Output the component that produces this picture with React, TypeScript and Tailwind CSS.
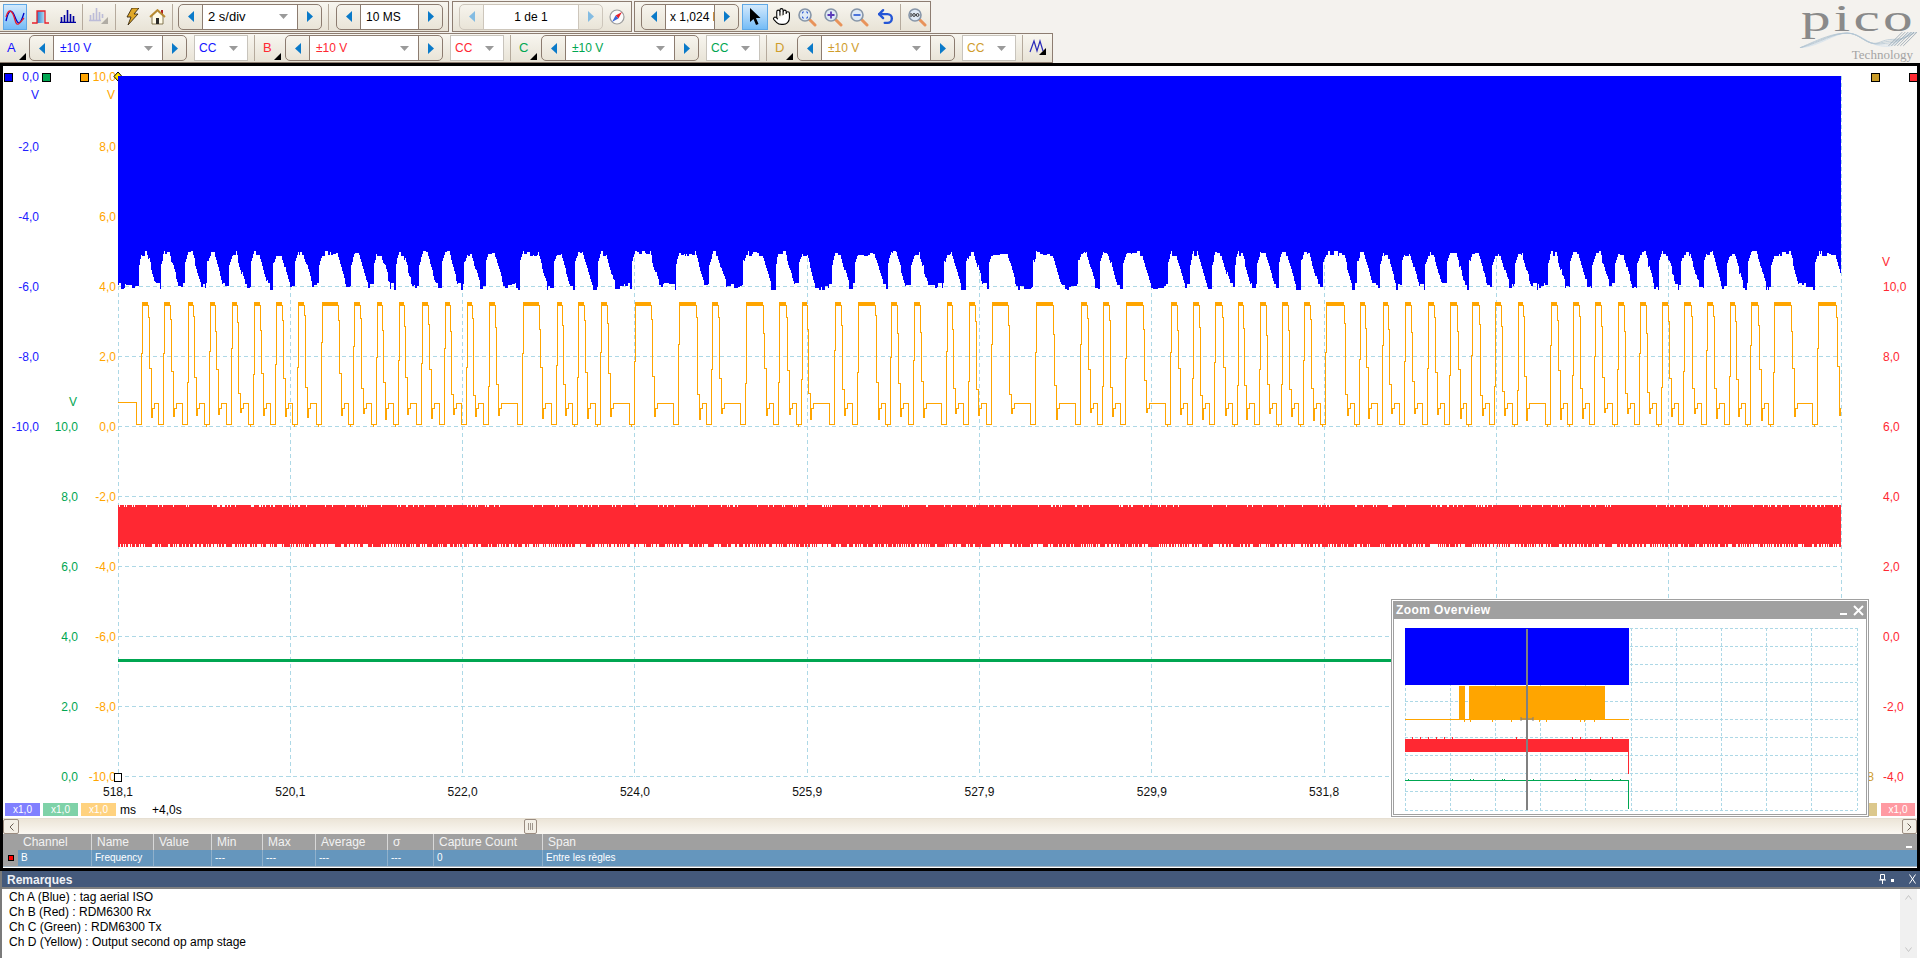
import React from "react";
import { Hand, Undo2 } from "lucide-react";

// rise / fall x of every high pulse on channel D, read off the trace
const PULSES: [number, number][] = [
  [141, 150], [163, 172], [187, 195], [209, 217], [231, 239], [253, 262], [275, 284], [297, 306], [321, 340], [353, 362],
  [376, 384], [398, 406], [421, 430], [444, 452], [466, 474], [488, 497], [522, 541], [556, 564], [577, 586], [600, 609],
  [634, 653], [678, 698], [711, 720], [745, 765], [778, 788], [801, 809], [834, 843], [857, 877], [890, 899], [913, 922],
  [946, 954], [968, 977], [991, 1010], [1035, 1055], [1080, 1089], [1102, 1111], [1125, 1145], [1170, 1179], [1192, 1201],
  [1214, 1224], [1237, 1245], [1259, 1268], [1281, 1290], [1303, 1312], [1325, 1346], [1359, 1367], [1382, 1390], [1404, 1413],
  [1427, 1436], [1449, 1459], [1471, 1481], [1494, 1503], [1517, 1525], [1550, 1559], [1572, 1581], [1594, 1603], [1617, 1626],
  [1639, 1648], [1661, 1670], [1683, 1693], [1706, 1715], [1729, 1737], [1750, 1760], [1773, 1793], [1817, 1838],
];

const PLOT_L = 118;
const PLOT_R = 1841;

function seeded(start: number) {
  let s = start;
  return () => {
    s = (s * 1664525 + 1013904223) % 4294967296;
    return s / 4294967296;
  };
}

function blockNoise(rnd: () => number, maxW: number, lo: number, span: number) {
  const out: number[] = [];
  while (out.length < PLOT_R - PLOT_L) {
    const w = 1 + Math.floor(rnd() * maxW);
    const y = lo + Math.floor(rnd() * span);
    for (let i = 0; i < w; i++) out.push(y);
  }
  return out;
}

function columnsPath(top: (i: number) => number, bottom: (i: number) => number) {
  let down = `M${PLOT_L} ${top(0)}`;
  for (let i = 0; i < PLOT_R - PLOT_L; i++) down += `V${bottom(i)}H${PLOT_L + i + 1}`;
  let up = "";
  for (let i = PLOT_R - PLOT_L - 1; i >= 0; i--) up += `V${top(i)}H${PLOT_L + i}`;
  return down + up + "Z";
}

function blueWave() {
  const rnd = seeded(11);
  const deep = blockNoise(rnd, 4, 283, 8);
  const crest = blockNoise(rnd, 4, 251, 6);
  const bottom = deep.slice();
  for (const [r, f] of PULSES) {
    for (let x = r - 2; x < f + 6 && x < PLOT_R; x++) {
      let y = crest[x - PLOT_L];
      if (x < r + 1) y += (r + 1 - x) * 3;
      if (x > f - 3) y += (x - (f - 3)) * 3.5;
      bottom[x - PLOT_L] = Math.round(y);
    }
  }
  return columnsPath(() => 76, (i) => bottom[i]);
}

function redWave() {
  const rnd = seeded(29);
  const top = blockNoise(rnd, 7, 505, 1).map(() => (rnd() < 0.14 ? 507 : 505));
  const low = blockNoise(rnd, 3, 544, 1).map(() => (rnd() < 0.6 ? 547 : 544));
  return columnsPath((i) => top[i], (i) => low[i]);
}

function orangeWave() {
  const rnd = seeded(53);
  const pick = (a: number, b: number) => Math.round(a + rnd() * (b - a));
  let d = `M${PLOT_L} 402H136V424`;
  PULSES.forEach(([r, f], n) => {
    const next = PULSES[n + 1];
    d += `H${r}V${pick(340, 390)}H${r + 1}V305H${f - 2}V${pick(315, 335)}H${f - 1}V${pick(365, 395)}H${f + 1}V${pick(412, 420)}H${f + 2}V408`;
    if (next) {
      const end = next[0] - 5;
      d += `H${f + 4}V403`;
      if (end - f > 20) {
        for (let x = f + 10; x < end - 4; x += pick(8, 18)) d += `H${x}V${pick(399, 406)}V403`;
      }
      d += `H${end}V424`;
      if (rnd() < 0.5) d += `H${end + 2}V427V424`;
    } else {
      d += `H${PLOT_R}`;
    }
  });
  return d;
}

const BLUE_PATH = blueWave();
const RED_PATH = redWave();
const ORANGE_PATH = orangeWave();

const X_LABELS = ["518,1", "520,1", "522,0", "524,0", "525,9", "527,9", "529,9", "531,8"];

const axisLeft: { x: number; fill: string; rows: [string, number][] }[] = [
  { x: 39, fill: "#2020ff", rows: [["0,0", 76], ["-2,0", 146], ["-4,0", 216], ["-6,0", 286], ["-8,0", 356], ["-10,0", 426]] },
  { x: 78, fill: "#00a651", rows: [["10,0", 426], ["8,0", 496], ["6,0", 566], ["4,0", 636], ["2,0", 706], ["0,0", 776]] },
  {
    x: 116,
    fill: "#ffa500",
    rows: [["10,0", 76], ["8,0", 146], ["6,0", 216], ["4,0", 286], ["2,0", 356], ["0,0", 426], ["-2,0", 496], ["-4,0", 566], ["-6,0", 636], ["-8,0", 706], ["-10,0", 776]],
  },
];

const axisRight: [string, number][] = [["10,0", 286], ["8,0", 356], ["6,0", 426], ["4,0", 496], ["2,0", 566], ["0,0", 636], ["-2,0", 706], ["-4,0", 776]];

const Triangle = ({ dir, color = "#0a7ac9" }: { dir: "left" | "right"; color?: string }) => (
  <svg width="6" height="11" viewBox="0 0 6 11">
    <path d={dir === "left" ? "M6 0V11L0 5.5Z" : "M0 0V11L6 5.5Z"} fill={color} />
  </svg>
);

const Chevron = () => (
  <svg width="9" height="5" viewBox="0 0 9 5" className="shrink-0">
    <path d="M0 0H9L4.5 5Z" fill="#9a9a9a" />
  </svg>
);

const Corner = () => (
  <svg width="7" height="7" viewBox="0 0 7 7" className="shrink-0">
    <path d="M7 0V7H0Z" fill="#000" />
  </svg>
);

const Sep = ({ className }: { className: string }) => <div className={`w-px h-[26px] bg-[#b5aa9c] shrink-0 ${className}`} />;

const Spin = ({
  fieldW,
  sideW = 25,
  disabled,
  className,
  children,
}: {
  fieldW: number;
  sideW?: number;
  disabled?: boolean;
  className?: string;
  children: React.ReactNode;
}) => (
  <div
    className={`flex h-[26px] shrink-0 rounded-[5px] border overflow-hidden ${disabled ? "border-[#cdc6bb]" : "border-[#8c7c70]"} ${className ?? ""}`}
    style={{ width: fieldW + sideW * 2 }}
  >
    <div className={`flex-1 flex items-center justify-center border-r ${disabled ? "border-[#cdc6bb]" : "border-[#8c7c70]"}`}>
      <Triangle dir="left" color={disabled ? "#84bce2" : "#0a7ac9"} />
    </div>
    <div className="bg-white h-full flex items-center overflow-hidden shrink-0" style={{ width: fieldW }}>
      {children}
    </div>
    <div className={`flex-1 flex items-center justify-center border-l ${disabled ? "border-[#cdc6bb]" : "border-[#8c7c70]"}`}>
      <Triangle dir="right" color={disabled ? "#84bce2" : "#0a7ac9"} />
    </div>
  </div>
);

const Btn = ({ w, active, children }: { w: string; active?: boolean; children: React.ReactNode }) => (
  <div
    className={`${w} h-[26px] shrink-0 flex items-center justify-center ${
      active ? "border border-[#5fa8e6] bg-gradient-to-b from-[#d2e9fc] to-[#74bcf6]" : ""
    }`}
  >
    {children}
  </div>
);

const Mag = ({ children }: { children?: React.ReactNode }) => (
  <svg width="20" height="20" viewBox="0 0 20 20">
    <line x1="12" y1="12" x2="18" y2="18" stroke="#e8935a" strokeWidth="3" strokeLinecap="round" />
    <circle cx="8" cy="8" r="6" fill="#dfe9f4" stroke="#8796a8" strokeWidth="1.6" />
    {children}
  </svg>
);

const ChannelControl = ({ letter, color, first }: { letter: string; color: string; first?: boolean }) => (
  <div className="flex items-center shrink-0">
    <div className={`${first ? "w-[29px] pl-[7px]" : "w-[30px] pl-[8px]"} h-[26px] flex shrink-0 relative items-center`}>
      <span className="text-[13px]" style={{ color }}>
        {letter}
      </span>
      <span className="absolute left-[19px] bottom-[1px]">
        <Corner />
      </span>
    </div>
    <Spin fieldW={108}>
      <div className="flex w-full items-center justify-between pl-[6px] pr-[9px]">
        <span className="text-[12px]" style={{ color }}>
          ±10 V
        </span>
        <Chevron />
      </div>
    </Spin>
    <div className="ml-[7px] w-[54px] h-[26px] shrink-0 bg-white border border-[#c8c4bc] flex items-center justify-between pl-[4px] pr-[9px]">
      <span className="text-[12px]" style={{ color }}>
        CC
      </span>
      <Chevron />
    </div>
    <Sep className="ml-[6px]" />
  </div>
);

const Logo = () => (
  <div className="ml-auto w-[124px] h-[63px] flex flex-col items-end pr-[7px]">
    <span className="font-['Liberation_Serif',serif] text-[#8a8a8a] text-[37px] leading-[32px] tracking-[2px] [transform:scaleX(1.6)] [transform-origin:right] mt-[3px] mr-[-3px]">pico</span>
    <svg width="120" height="16" viewBox="0 0 122 16" className="-mt-[3px] mr-[-5px] shrink-0">
      {[0, 2, 4, 6, 8].map((o) => (
        <path key={o} d={`M2 16C24 ${14 - o} 36 1 50 1S70 ${12 + o / 2} 84 ${14 - o / 2}S100 12 ${112 + o} 0`} fill="none" stroke={o < 4 ? "#d5e2ec" : "#b4c5d2"} strokeWidth="0.8" />
      ))}
      {[0, 3, 6, 9, 12, 15].map((o) => (
        <path key={o} d={`M${92 + o} 14L${106 + o} 0`} fill="none" stroke="#8f9fac" strokeWidth="0.8" />
      ))}
    </svg>
    <span className="font-['Liberation_Serif',serif] text-[#a4a4a4] text-[13px] leading-[12px] mt-[1px]">Technology</span>
  </div>
);

const Toolbars = () => (
  <header className="flex h-[63px] shrink-0 bg-[#f4f2ee]">
    <div className="flex flex-col">
      {/* acquisition row */}
      <div className="flex h-[33px] items-start">
        <div className="flex items-center h-[31px] mt-px w-[449px] pl-[3px] border-y border-r border-[#8d7d71] bg-gradient-to-b from-[#f8f6f0] to-[#e8e3d6]">
          <Btn w="w-[24px]" active>
            <svg width="20" height="16" viewBox="0 0 20 16">
              <path d="M1 12C4 -1 7 0 10 8S15 17 19 4" fill="none" stroke="#0000c8" strokeWidth="1.3" />
              <path d="M1 8C4 -3 8 3 10 11S15 14 19 9" fill="none" stroke="#e8202c" strokeWidth="1.3" />
            </svg>
          </Btn>
          <Btn w="w-[28px]">
            <svg width="18" height="14" viewBox="0 0 18 14">
              <defs>
                <linearGradient id="digitalFill" x1="0" x2="1" y1="0" y2="0">
                  <stop offset="0" stopColor="#2a7fd0" />
                  <stop offset="1" stopColor="#b8e2f6" />
                </linearGradient>
              </defs>
              <rect x="5" y="1" width="8" height="12" fill="url(#digitalFill)" />
              <path d="M0 13H5V1H13V13H17" fill="none" stroke="#e8202c" strokeWidth="1.3" />
            </svg>
          </Btn>
          <Btn w="w-[26px]">
            <svg width="16" height="13" viewBox="0 0 16 13">
              <path d="M0 12.5H16M1.5 7V12M4.5 5V12M7.5 0V12M10.5 4V12M13.5 6V12" stroke="#0000a0" strokeWidth="1.6" fill="none" />
            </svg>
          </Btn>
          <Sep className="ml-[1px]" />
          <Btn w="w-[32px]">
            <svg width="20" height="17" viewBox="0 0 20 17">
              <path d="M0 12.5H12M1.5 7V12M4.5 5V12M7.5 0V12M10.5 4V12M13.5 6V10" stroke="#bcbcd8" strokeWidth="1.6" fill="none" />
              <path d="M19 9V16H12Z" fill="#b0aca4" />
            </svg>
          </Btn>
          <Sep className="" />
          <Btn w="w-[32px]">
            <svg width="14" height="17" viewBox="0 0 14 17">
              <path d="M7 0H14L9 6H13L3 17L6 9H2Z" fill="#e0a828" stroke="#3a2a10" strokeWidth="0.9" />
            </svg>
          </Btn>
          <Btn w="w-[18px]">
            <svg width="17" height="16" viewBox="0 0 17 16">
              <rect x="12" y="1" width="2" height="4" fill="#b02020" />
              <path d="M3 7V15H14V7L8.5 2Z" fill="#fffbe8" stroke="#6a5a30" strokeWidth="0.8" />
              <path d="M1 8L8.5 1L16 8" fill="none" stroke="#b88a30" strokeWidth="1.8" />
              <rect x="7" y="9" width="3" height="6" fill="#2a2a2a" />
            </svg>
          </Btn>
          <Sep className="ml-[6px]" />
          <Spin fieldW={94} sideW={25} className="ml-[5px]">
            <div className="flex w-full items-center justify-between pl-[5px] pr-[9px]">
              <span className="text-[13px] text-black">2 s/div</span>
              <Chevron />
            </div>
          </Spin>
          <Sep className="ml-[6px]" />
          <Spin fieldW={57} sideW={25} className="ml-[7px]">
            <span className="text-[12px] text-black pl-[5px]">10 MS</span>
          </Spin>
        </div>
        <div className="flex items-center h-[31px] mt-px ml-[3px] w-[180px] pl-[6px] border border-[#8d7d71] bg-gradient-to-b from-[#f8f6f0] to-[#e8e3d6]">
          <Spin fieldW={94} disabled>
            <span className="text-[12px] text-black w-full text-center">1 de 1</span>
          </Spin>
          <Btn w="w-[28px]">
            <svg width="16" height="16" viewBox="0 0 16 16">
              <circle cx="8" cy="8" r="7" fill="#fbfbfb" stroke="#9c9c9c" strokeWidth="1.2" />
              <path d="M13 3L6.6 6.6L9.4 9.4Z" fill="#e8202c" />
              <path d="M3 13L6.6 6.6L9.4 9.4Z" fill="#3a66d8" />
            </svg>
          </Btn>
        </div>
        <div className="flex items-center h-[31px] mt-px ml-[2px] w-[297px] pl-[6px] border border-[#8d7d71] bg-gradient-to-b from-[#f8f6f0] to-[#e8e3d6]">
          <Spin fieldW={48}>
            <span className="text-[12px] text-black pl-[4px] whitespace-nowrap">x 1,024 k</span>
          </Spin>
          <div className="ml-[3px]">
            <Btn w="w-[26px]" active>
              <svg width="12" height="18" viewBox="0 0 12 18">
                <path d="M1 0V14L4.5 11L7 17L9.5 16L7 10H11.5Z" fill="#000" />
              </svg>
            </Btn>
          </div>
          <Btn w="w-[26px]">
            <Hand size={19} strokeWidth={1.4} color="#000" fill="#fff" />
          </Btn>
          <Btn w="w-[26px]">
            <Mag>
              <path d="M5.5 6.5V5H7M10.5 9.5V11H9M10.5 6.5V5H9M5.5 9.5V11H7" stroke="#3a66d8" strokeWidth="1" fill="none" />
            </Mag>
          </Btn>
          <Btn w="w-[26px]">
            <Mag>
              <path d="M4.5 8H11.5M8 4.5V11.5" stroke="#5a3ab8" strokeWidth="1.8" />
            </Mag>
          </Btn>
          <Btn w="w-[26px]">
            <Mag>
              <path d="M4.5 8H11.5" stroke="#3a66d8" strokeWidth="1.8" />
            </Mag>
          </Btn>
          <Btn w="w-[26px]">
            <Undo2 size={19} strokeWidth={3} color="#2456d6" />
          </Btn>
          <Sep className="ml-[2px]" />
          <Btn w="w-[31px]">
            <Mag>
              <path d="M4 6V10" stroke="#222" strokeWidth="1" />
              <circle cx="7" cy="8" r="1.4" fill="none" stroke="#222" strokeWidth="0.9" />
              <circle cx="10.6" cy="8" r="1.4" fill="none" stroke="#222" strokeWidth="0.9" />
            </Mag>
          </Btn>
        </div>
      </div>
      {/* channel row */}
      <div className="flex items-center h-[30px] w-[1053px] border-y border-r border-[#8d7d71] bg-gradient-to-b from-[#f8f6f0] to-[#e8e3d6]">
        <ChannelControl first letter="A" color="#1414ff" />
        <ChannelControl letter="B" color="#ff2832" />
        <ChannelControl letter="C" color="#00a651" />
        <ChannelControl letter="D" color="#cf9d2c" />
        <Btn w="w-[30px]">
          <svg width="18" height="18" viewBox="0 0 18 18">
            <path d="M1 13L5 2L8 12L11 2L14 12" fill="none" stroke="#2a2ab8" strokeWidth="1.2" />
            <path d="M17 9V16H10Z" fill="#000" />
          </svg>
        </Btn>
      </div>
    </div>
    <Logo />
  </header>
);

const ScopeChart = () => (
  <svg width="1914" height="737" viewBox="3 66 1914 737" className="block shrink-0">
    {Array.from({ length: 11 }, (_, i) => (
      <line key={`h${i}`} x1={PLOT_L} x2={PLOT_R} y1={76.5 + i * 70} y2={76.5 + i * 70} stroke="#add8e6" strokeDasharray="4 3" shapeRendering="crispEdges" />
    ))}
    {Array.from({ length: 11 }, (_, i) => (
      <line key={`v${i}`} x1={PLOT_L + i * 172.3} x2={PLOT_L + i * 172.3} y1={76} y2={777} stroke="#add8e6" strokeDasharray="4 3" shapeRendering="crispEdges" />
    ))}

    {axisLeft.map((col) =>
      col.rows.map(([label, y]) => (
        <text key={`${col.x}${label}`} x={col.x} y={y + 4.5} textAnchor="end" fontSize="12" fill={col.fill}>
          {label}
        </text>
      )),
    )}
    <text x="39" y="99" textAnchor="end" fontSize="12" fill="#2020ff">V</text>
    <text x="115" y="99" textAnchor="end" fontSize="12" fill="#ffa500">V</text>
    <text x="77" y="406" textAnchor="end" fontSize="12" fill="#00a651">V</text>
    <text x="1882" y="266" fontSize="12" fill="#ff2832">V</text>
    {axisRight.map(([label, y]) => (
      <text key={y} x="1883" y={y + 4.5} fontSize="12" fill="#ff2832">
        {label}
      </text>
    ))}
    <text x="1874" y="780.5" textAnchor="end" fontSize="12" fill="#cf9d2c">8</text>

    {[[4, "#0000ff"], [42, "#00a651"], [80, "#ffa500"], [1871, "#c89b28"], [1909, "#ff2832"]].map(([x, c]) => (
      <rect key={x as number} x={(x as number) + 0.5} y="73.5" width="8" height="8" fill={c as string} stroke="#000" shapeRendering="crispEdges" />
    ))}

    <polygon points="118,72 122,76.5 118,81 114,76.5" fill="#ffe600" stroke="#000" strokeWidth="1" />
    <path d={BLUE_PATH} fill="#0000ff" shapeRendering="crispEdges" />
    <path d={RED_PATH} fill="#ff2832" shapeRendering="crispEdges" />
    <path d={ORANGE_PATH} fill="none" stroke="#ffa500" strokeWidth="1" shapeRendering="crispEdges" />
    {PULSES.map(([r, f]) => (
      <rect key={r} x={r + 1} y="302" width={f - r - 3} height="4" fill="#ffa500" shapeRendering="crispEdges" />
    ))}
    <rect x={PLOT_L} y="659" width="1273" height="3" fill="#00a651" />
    <rect x="114.5" y="773.5" width="7" height="8" fill="#fff" stroke="#000" shapeRendering="crispEdges" />

    {X_LABELS.map((label, i) => (
      <text key={label} x={PLOT_L + i * 172.3} y="795.5" textAnchor="middle" fontSize="12" fill="#111">
        {label}
      </text>
    ))}
  </svg>
);

const ZoomOverview = () => (
  <div className="absolute left-[1388px] top-[533px] w-[478px] h-[218px] z-10 border border-[#a0a0a0] p-px bg-white">
    <div className="h-full border-x border-b border-[#a0a0a0] flex flex-col">
      <div className="h-[18px] shrink-0 bg-[#a0a0a0] flex items-center justify-between pl-[2px] pr-[2px]">
        <span className="text-[12px] font-bold text-white tracking-[0.4px]">Zoom Overview</span>
        <div className="flex items-end gap-[6px]">
          <div className="w-[7px] h-[2px] bg-white mb-[1px]" />
          <svg width="11" height="11" viewBox="0 0 11 11">
            <path d="M1 1L10 10M10 1L1 10" stroke="#fff" strokeWidth="2" />
          </svg>
        </div>
      </div>
      <svg width="472" height="195" viewBox="1394 619 472 195" className="block">
        {Array.from({ length: 11 }, (_, i) => (
          <line key={`h${i}`} x1="1405" x2="1857" y1={628.5 + i * 18.15} y2={628.5 + i * 18.15} stroke="#add8e6" strokeDasharray="3 2" shapeRendering="crispEdges" />
        ))}
        {Array.from({ length: 11 }, (_, i) => (
          <line key={`v${i}`} x1={1405 + i * 45.2} x2={1405 + i * 45.2} y1="628" y2="810" stroke="#add8e6" strokeDasharray="3 2" shapeRendering="crispEdges" />
        ))}
        <rect x="1405" y="628" width="224" height="57" fill="#0000ff" />
        <rect x="1459" y="686" width="6" height="33" fill="#ffa500" />
        <rect x="1469" y="686" width="136" height="33" fill="#ffa500" />
        <rect x="1405" y="719" width="224" height="1" fill="#ffa500" />
        {[1464, 1470, 1492, 1511, 1539, 1546, 1580, 1584, 1594].map((x) => (
          <rect key={x} x={x} y="720" width="1" height="2" fill="#ffa500" />
        ))}
        <rect x="1405" y="739" width="224" height="13" fill="#ff2832" />
        {[1412, 1420, 1428, 1436, 1444, 1452, 1516, 1572, 1580, 1600, 1612].map((x) => (
          <rect key={x} x={x} y="737" width="1" height="2" fill="#ff2832" />
        ))}
        <rect x="1628" y="752" width="1" height="22" fill="#ff2832" />
        <rect x="1405" y="780" width="224" height="1" fill="#00a651" />
        {[1408, 1452, 1470, 1473, 1502, 1504, 1533, 1575, 1590, 1612, 1620].map((x) => (
          <rect key={x} x={x} y="779" width="1" height="1" fill="#00a651" />
        ))}
        <rect x="1628" y="780" width="1" height="29" fill="#00a651" />
        <rect x="1526" y="629" width="2" height="181" fill="#808080" />
        <path d="M1521 717V721M1521 719H1533M1533 717V721" stroke="#808080" strokeWidth="1" fill="none" />
      </svg>
    </div>
  </div>
);

const ScaleBox = ({ bg, w, text, className }: { bg: string; w: string; text?: string; className?: string }) => (
  <div className={`${bg} ${w} h-[13px] shrink-0 flex items-center justify-center text-[10px] text-white ${className ?? ""}`}>{text}</div>
);

const BottomStrip = () => (
  <div className="h-[15px] shrink-0 flex pl-[2px]">
    <ScaleBox bg="bg-[#8080ff]" w="w-[35px]" text="x1,0" />
    <ScaleBox bg="bg-[#7fd2a8]" w="w-[35px]" text="x1,0" className="ml-[3px]" />
    <ScaleBox bg="bg-[#ffd27f]" w="w-[35px]" text="x1,0" className="ml-[3px]" />
    <span className="text-[12px] leading-[14px] text-black ml-[4px]">ms</span>
    <span className="text-[12px] leading-[14px] text-black ml-[16px]">+4,0s</span>
    <ScaleBox bg="bg-[#dcc88c]" w="w-[20px]" className="ml-auto mr-[4px]" />
    <ScaleBox bg="bg-[#ff9aa2]" w="w-[34px]" text="x1,0" className="mr-[2px]" />
  </div>
);

const Scrollbar = () => (
  <div className="h-[16px] shrink-0 flex items-center bg-gradient-to-b from-[#ece5d8] to-[#fbf8f2] border-t border-[#e6dfd2]">
    <div className="w-[16px] h-[15px] rounded-[2px] border border-[#9a8c80] bg-[#f3efe6] flex items-center justify-center">
      <svg width="5" height="8" viewBox="0 0 5 8">
        <path d="M4.5 0.5L1 4L4.5 7.5" fill="none" stroke="#6a5f55" strokeWidth="1" />
      </svg>
    </div>
    <div className="ml-[505px] w-[13px] h-[15px] rounded-[2px] border border-[#9a8c80] bg-[#f3efe6] flex items-center justify-center">
      <svg width="5" height="7" viewBox="0 0 5 7">
        <path d="M0.5 0V7M2.5 0V7M4.5 0V7" stroke="#8a8076" strokeWidth="0.8" />
      </svg>
    </div>
    <div className="ml-auto w-[15px] h-[15px] rounded-[2px] border border-[#9a8c80] bg-[#f3efe6] flex items-center justify-center">
      <svg width="5" height="8" viewBox="0 0 5 8">
        <path d="M0.5 0.5L4 4L0.5 7.5" fill="none" stroke="#6a5f55" strokeWidth="1" />
      </svg>
    </div>
  </div>
);

const COLS = "grid grid-cols-[15px_73px_62px_58px_51px_53px_72px_46px_109px_1fr]";
const HEAD = ["", "Channel", "Name", "Value", "Min", "Max", "Average", "σ", "Capture Count", "Span"];
const ROW = ["B", "Frequency", "", "---", "---", "---", "---", "0", "Entre les règles"];

const MeasureTable = () => (
  <div className="h-[34px] shrink-0 flex flex-col">
    <div className={`${COLS} h-[16px] bg-[#a0a0a0] relative`}>
      {HEAD.map((h, i) => (
        <div key={i} className={`text-[12px] leading-[16px] text-[#f2f2f2] pl-[5px] whitespace-nowrap ${i > 1 ? "border-l border-[#d8d8d8]" : ""}`}>
          {h}
        </div>
      ))}
      <div className="absolute right-[5px] bottom-[2px] w-[6px] h-[2px] bg-white" />
    </div>
    <div className={`${COLS} h-[16px] bg-[#6596bd] border-b-0`}>
      <div className="bg-[#a0a0a0] flex items-center justify-center">
        <div className="w-[6px] h-[6px] bg-[#ff0000] border border-black" />
      </div>
      {ROW.map((c, i) => (
        <div key={i} className={`text-[10px] leading-[16px] text-white pl-[3px] whitespace-nowrap ${i > 0 ? "border-l border-[#8fb0cb]" : ""}`}>
          {c}
        </div>
      ))}
    </div>
    <div className="h-px bg-[#a3b4c2]" />
    <div className="h-px bg-white" />
  </div>
);

const NOTES = ["Ch A (Blue) : tag aerial ISO", "Ch B (Red) : RDM6300 Rx", "Ch C (Green) : RDM6300 Tx", "Ch D (Yellow) : Output second op amp stage"];

const Remarques = () => (
  <section className="flex-1 flex flex-col border-l-2 border-[#7a7a7a] min-h-0">
    <div className="h-[18px] shrink-0 bg-[#44597b] border-b-2 border-[#808080] flex items-center justify-between pl-[5px] pr-[4px]">
      <span className="text-[12px] font-bold text-[#eef1f6] pt-px">Remarques</span>
      <div className="flex items-center gap-[5px]">
        <svg width="7" height="10" viewBox="0 0 7 10">
          <path d="M1.5 0.5H5.5V5.5H1.5ZM0 6H7M3.5 6V10" fill="none" stroke="#fff" strokeWidth="1" />
        </svg>
        <div className="w-[3px] h-[3px] bg-white self-end mb-[2px] mr-[10px]" />
        <svg width="7" height="10" viewBox="0 0 7 10">
          <path d="M0.5 0.5L6.5 9.5M6.5 0.5L0.5 9.5" stroke="#fff" strokeWidth="1" />
        </svg>
      </div>
    </div>
    <div className="flex-1 flex bg-white min-h-0">
      <div className="flex-1 pl-[7px] pt-px flex flex-col">
        {NOTES.map((n) => (
          <div key={n} className="text-[12px] leading-[15px] text-black">
            {n}
          </div>
        ))}
      </div>
      <div className="w-[17px] mr-[3px] shrink-0 bg-[#f0f0f0] flex flex-col items-center justify-between py-[6px]">
        <svg width="7" height="5" viewBox="0 0 7 5">
          <path d="M0.5 4.5L3.5 0.5L6.5 4.5" fill="none" stroke="#c4c4c4" />
        </svg>
        <svg width="7" height="5" viewBox="0 0 7 5">
          <path d="M0.5 0.5L3.5 4.5L6.5 0.5" fill="none" stroke="#c4c4c4" />
        </svg>
      </div>
    </div>
  </section>
);

export default function App() {
  return (
    <div className="w-[1920px] h-[958px] flex flex-col bg-[#f4f2ee] overflow-hidden font-['Liberation_Sans',Arial,sans-serif]">
      <Toolbars />
      <main className="relative h-[808px] shrink-0 flex flex-col bg-white border-[3px] border-black">
        <ScopeChart />
        <BottomStrip />
        <Scrollbar />
        <MeasureTable />
        <ZoomOverview />
      </main>
      <Remarques />
    </div>
  );
}
